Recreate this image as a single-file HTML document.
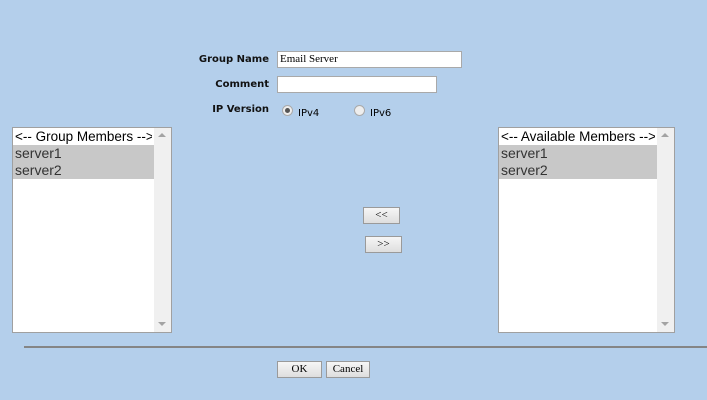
<!DOCTYPE html>
<html><head><style>
body{margin:0;width:707px;height:400px;background:#b4cfeb;position:relative;overflow:hidden;font-family:"Liberation Sans",sans-serif}
.a{position:absolute}
.lbl{font-weight:bold;font-size:10px;color:#111;text-align:right;width:120px;font-family:"DejaVu Sans",sans-serif}
.inp{background:#fff;border:1px solid #a9a9a9;box-sizing:border-box;font-family:"Liberation Serif",serif;font-size:11px;padding-left:2px;line-height:14px}
.box{background:#fff;border:1px solid #a0a0a0;box-sizing:border-box;font-size:14px;color:#222}
.sb{position:absolute;top:0;right:0;width:17px;bottom:0;background:#f0f0f0}
.row{height:17px;line-height:17px;padding-left:2px;white-space:nowrap;overflow:hidden}
.sel{background:#c8c8c8;color:#333}
.btn{background:linear-gradient(#f6f6f6,#dedede);border:1px solid #9a9a9a;box-sizing:border-box;font-family:"Liberation Serif",serif;font-size:11px;text-align:center;color:#000}
.radio{width:11px;height:11px;border-radius:50%;border:1px solid #aaa;background:#eee;box-sizing:border-box}
.up,.dn{position:absolute;left:4px;width:0;height:0;border-left:4px solid transparent;border-right:4px solid transparent}
.up{top:5px;border-bottom:4px solid #a3a3a3}
.dn{bottom:6px;border-top:4px solid #a3a3a3}
</style></head><body>
<div class="a lbl" style="left:149px;top:54px">Group Name</div>
<div class="a lbl" style="left:149px;top:79px">Comment</div>
<div class="a lbl" style="left:149px;top:104px">IP Version</div>
<div class="a inp" style="left:277px;top:51px;width:185px;height:17px">Email Server</div>
<div class="a inp" style="left:277px;top:76px;width:160px;height:17px"></div>
<div class="a radio" style="left:282px;top:105px"><div style="width:5px;height:5px;border-radius:50%;background:#555;margin:2px"></div></div>
<div class="a" style="left:298px;top:108px;font-size:10px;font-family:'DejaVu Sans',sans-serif">IPv4</div>
<div class="a radio" style="left:354px;top:105px"></div>
<div class="a" style="left:370px;top:108px;font-size:10px;font-family:'DejaVu Sans',sans-serif">IPv6</div>

<div class="a box" style="left:12px;top:127px;width:160px;height:206px">
<div class="sb"><div class="up"></div><div class="dn"></div></div>
<div class="row" style="color:#000;font-size:13.5px;width:137px">&lt;-- Group Members --&gt;</div>
<div class="row sel" style="width:139px">server1</div>
<div class="row sel" style="width:139px">server2</div>
</div>
<div class="a box" style="left:498px;top:127px;width:177px;height:206px">
<div class="sb"><div class="up"></div><div class="dn"></div></div>
<div class="row" style="color:#000;font-size:13.5px;width:154px">&lt;-- Available Members --&gt;</div>
<div class="row sel" style="width:156px">server1</div>
<div class="row sel" style="width:156px">server2</div>
</div>

<div class="a btn" style="left:363px;top:207px;width:37px;height:17px;line-height:15px">&lt;&lt;</div>
<div class="a btn" style="left:365px;top:236px;width:37px;height:17px;line-height:15px">&gt;&gt;</div>
<div class="a" style="left:24px;top:346px;width:683px;height:2px;background:#858585"></div>
<div class="a btn" style="left:277px;top:361px;width:45px;height:17px;line-height:15px">OK</div>
<div class="a btn" style="left:326px;top:361px;width:44px;height:17px;line-height:15px">Cancel</div>
</body></html>
